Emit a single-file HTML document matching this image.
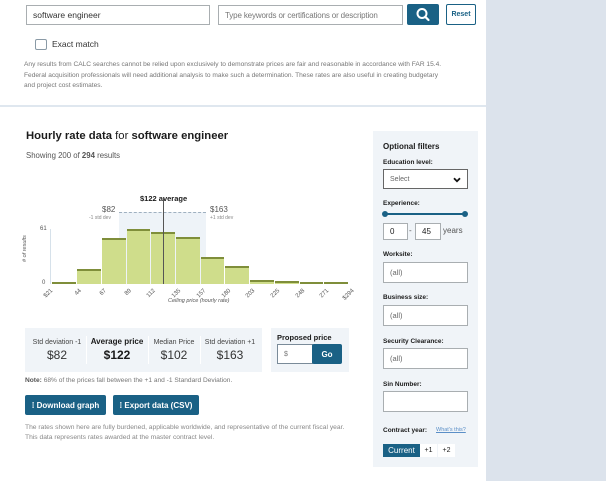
<!DOCTYPE html>
<html><head><meta charset="utf-8"><style>
*{box-sizing:border-box;margin:0;padding:0}
body{width:606px;height:481px;overflow:hidden;background:#dce3ec;font-family:"Liberation Sans",sans-serif;color:#1b1b1b;position:relative}
.a{position:absolute}
.main{left:0;top:0;width:486px;height:481px;background:#fff}
.inp{border:1px solid #a9aeb1;background:#fff;font-size:9px;padding-left:6px;display:flex;align-items:center;white-space:nowrap;overflow:hidden}
.lbl{font-size:6.5px;font-weight:bold}
.bar{position:absolute;background:#cfdd8b;border-top:2px solid #7f8e3a;bottom:0}
.btn{background:#1a6185;color:#fff;font-weight:bold;font-size:8px;display:flex;align-items:center;justify-content:center;border-radius:2px}
.tick{position:absolute;font-size:6px;color:#555;transform:rotate(-45deg);transform-origin:right top}
</style></head><body>
<div class="a main"></div>
<div class="a inp" style="left:26px;top:5px;width:184px;height:20px;color:#333;font-size:8.5px">software engineer</div>
<div class="a inp" style="left:218px;top:5px;width:185px;height:20px;color:#777;font-size:8px;letter-spacing:-0.15px">Type keywords or certifications or description</div>
<div class="a" style="left:407px;top:4px;width:32px;height:21px;background:#1a6185;border-radius:2px">
<svg width="32" height="21" viewBox="0 0 32 21"><circle cx="15" cy="9.5" r="4.5" fill="none" stroke="#fff" stroke-width="2"/><line x1="18.3" y1="12.8" x2="21.5" y2="16" stroke="#fff" stroke-width="2.2" stroke-linecap="round"/></svg></div>
<div class="a" style="left:446px;top:4px;width:30px;height:21px;border:1px solid #1a6185;border-radius:2px;color:#1a6185;font-size:7px;font-weight:bold;display:flex;align-items:center;justify-content:center">Reset</div>
<div class="a" style="left:35px;top:39px;width:12px;height:11px;border:1px solid #8a9aa6;border-radius:2px"></div>
<div class="a" style="left:52px;top:39px;font-size:8.5px;color:#333">Exact match</div>
<div class="a" style="left:24px;top:60px;width:420px;font-size:6.6px;line-height:10.5px;color:#777">Any results from CALC searches cannot be relied upon exclusively to demonstrate prices are fair and reasonable in accordance with FAR 15.4. Federal acquisition professionals will need additional analysis to make such a determination. These rates are also useful in creating budgetary and project cost estimates.</div>
<div class="a" style="left:0;top:105px;width:486px;height:2px;background:#dfe7ef"></div>

<div class="a" style="left:26px;top:130px;font-size:11.3px;font-weight:bold">Hourly rate data <span style="font-weight:normal">for</span> software engineer</div>
<div class="a" style="left:26px;top:151px;font-size:7.8px;color:#555">Showing 200 of <b>294</b> results</div>

<div class="a" style="left:119px;top:212px;width:87px;height:72px;background:#eef3f8"></div>
<div class="a" style="left:119px;top:212px;width:87px;border-top:1px dashed #9fb0c0"></div>
<div class="a" style="left:102px;top:205px;font-size:8px;color:#555">$82</div>
<div class="a" style="left:89px;top:215px;font-size:5px;color:#888">-1 std dev</div>
<div class="a" style="left:210px;top:205px;font-size:8px;color:#555">$163</div>
<div class="a" style="left:210px;top:215px;font-size:5px;color:#888">+1 std dev</div>
<div class="a" style="left:140px;top:194px;font-size:7.5px;font-weight:bold">$122 average</div>
<div class="a" style="left:50px;top:229px;width:1px;height:55px;background:#d6e1ea"></div>
<div class="a" style="left:40px;top:226px;font-size:6px;color:#555">61</div>
<div class="a" style="left:42px;top:280px;font-size:6px;color:#555">0</div>
<div class="a" style="left:22px;top:262px;font-size:5.5px;color:#555;transform:rotate(-90deg);transform-origin:left top;white-space:nowrap;font-style:italic"># of results</div>
<div class="a" style="left:52px;top:220px;width:300px;height:64px">
<div class="bar" style="left:0;width:24px;height:2px"></div>
<div class="bar" style="left:25px;width:24px;height:15px"></div>
<div class="bar" style="left:50px;width:24px;height:46px"></div>
<div class="bar" style="left:75px;width:23px;height:55px"></div>
<div class="bar" style="left:99px;width:24px;height:52px"></div>
<div class="bar" style="left:124px;width:24px;height:47px"></div>
<div class="bar" style="left:149px;width:23px;height:27px"></div>
<div class="bar" style="left:173px;width:24px;height:18px"></div>
<div class="bar" style="left:198px;width:24px;height:4px"></div>
<div class="bar" style="left:223px;width:24px;height:3px"></div>
<div class="bar" style="left:248px;width:23px;height:1px"></div>
<div class="bar" style="left:272px;width:24px;height:2px"></div>
</div>
<div class="a" style="left:163px;top:198px;width:1px;height:86px;background:#555"></div>
<div class="tick" style="left:40px;top:288px">$21</div>
<div class="tick" style="left:72px;top:288px">44</div>
<div class="tick" style="left:97px;top:288px">67</div>
<div class="tick" style="left:122px;top:288px">89</div>
<div class="tick" style="left:143px;top:288px">112</div>
<div class="tick" style="left:168px;top:288px">135</div>
<div class="tick" style="left:193px;top:288px">157</div>
<div class="tick" style="left:218px;top:288px">180</div>
<div class="tick" style="left:242px;top:288px">203</div>
<div class="tick" style="left:267px;top:288px">225</div>
<div class="tick" style="left:292px;top:288px">248</div>
<div class="tick" style="left:316px;top:288px">271</div>
<div class="tick" style="left:338px;top:288px">$294</div>
<div class="a" style="left:168px;top:298px;font-size:5.5px;font-style:italic;color:#555">Ceiling price (hourly rate)</div>

<div class="a" style="left:25px;top:328px;width:237px;height:44px;background:#f0f4f8"></div>
<div class="a" style="left:28px;top:339px;width:58px;text-align:center;font-size:7px;color:#444">Std deviation -1<div style="font-size:12px;color:#333;margin-top:2px">$82</div></div>
<div class="a" style="left:86px;top:337px;width:62px;text-align:center;font-size:8px;font-weight:bold">Average price<div style="font-size:12px;margin-top:2px">$122</div></div>
<div class="a" style="left:148px;top:339px;width:52px;text-align:center;font-size:7px;color:#444">Median Price<div style="font-size:12px;color:#333;margin-top:2px">$102</div></div>
<div class="a" style="left:200px;top:339px;width:60px;text-align:center;font-size:7px;color:#444">Std deviation +1<div style="font-size:12px;color:#333;margin-top:2px">$163</div></div>
<div class="a" style="left:86px;top:336px;width:1px;height:28px;background:#fff"></div>
<div class="a" style="left:148px;top:336px;width:1px;height:28px;background:#fff"></div>
<div class="a" style="left:200px;top:336px;width:1px;height:28px;background:#fff"></div>
<div class="a" style="left:271px;top:328px;width:78px;height:44px;background:#f0f4f8"></div>
<div class="a" style="left:277px;top:333px;font-size:7.5px;font-weight:bold">Proposed price</div>
<div class="a inp" style="left:277px;top:344px;width:36px;height:20px;font-size:7px;color:#777;border-color:#7a8b99">$</div>
<div class="a btn" style="left:312px;top:344px;width:30px;height:20px">Go</div>
<div class="a" style="left:25px;top:377px;font-size:6.6px;color:#777"><b style="color:#555">Note:</b> 68% of the prices fall between the +1 and -1 Standard Deviation.</div>
<div class="a btn" style="left:25px;top:395px;width:81px;height:20px">⁞ Download graph</div>
<div class="a btn" style="left:113px;top:395px;width:86px;height:20px">⁞ Export data (CSV)</div>
<div class="a" style="left:25px;top:423px;width:330px;font-size:6.7px;line-height:10px;color:#888">The rates shown here are fully burdened, applicable worldwide, and representative of the current fiscal year. This data represents rates awarded at the master contract level.</div>

<div class="a" style="left:373px;top:131px;width:105px;height:336px;background:#f0f4f8"></div>
<div class="a" style="left:383px;top:142px;font-size:8px;font-weight:bold">Optional filters</div>
<div class="a lbl" style="left:383px;top:159px">Education level:</div>
<div class="a inp" style="left:383px;top:169px;width:85px;height:20px;font-size:7px;color:#666;border-color:#666">Select<svg style="position:absolute;right:6px;top:7px" width="8" height="6" viewBox="0 0 8 6"><path d="M1 1.2 L4 4.2 L7 1.2" fill="none" stroke="#111" stroke-width="1.8"/></svg></div>
<div class="a lbl" style="left:383px;top:200px">Experience:</div>
<div class="a" style="left:385px;top:213px;width:80px;height:2px;background:#1a6185"></div>
<div class="a" style="left:382px;top:211px;width:6px;height:6px;border-radius:50%;background:#1a6185"></div>
<div class="a" style="left:462px;top:211px;width:6px;height:6px;border-radius:50%;background:#1a6185"></div>
<div class="a inp" style="left:383px;top:223px;width:25px;height:17px;font-size:8px">0</div>
<div class="a" style="left:409px;top:226px;font-size:8px;color:#555">-</div>
<div class="a inp" style="left:415px;top:223px;width:26px;height:17px;font-size:8px">45</div>
<div class="a" style="left:443px;top:226px;font-size:8px;color:#555">years</div>
<div class="a lbl" style="left:383px;top:251px">Worksite:</div>
<div class="a inp" style="left:383px;top:262px;width:85px;height:21px;font-size:7.5px;color:#666">(all)</div>
<div class="a lbl" style="left:383px;top:294px">Business size:</div>
<div class="a inp" style="left:383px;top:305px;width:85px;height:21px;font-size:7.5px;color:#666">(all)</div>
<div class="a lbl" style="left:383px;top:338px">Security Clearance:</div>
<div class="a inp" style="left:383px;top:348px;width:85px;height:21px;font-size:7.5px;color:#666">(all)</div>
<div class="a lbl" style="left:383px;top:381px">Sin Number:</div>
<div class="a inp" style="left:383px;top:391px;width:85px;height:21px"></div>
<div class="a lbl" style="left:383px;top:427px">Contract year:</div>
<div class="a" style="left:436px;top:427px;font-size:5.5px;color:#5b8fc7;text-decoration:underline">What's this?</div>
<div class="a" style="left:383px;top:444px;width:37px;height:13px;background:#1a6185;color:#fff;font-size:8px;display:flex;align-items:center;justify-content:center">Current</div>
<div class="a" style="left:420px;top:444px;width:17px;height:13px;background:#fff;font-size:7px;display:flex;align-items:center;justify-content:center">+1</div>
<div class="a" style="left:438px;top:444px;width:17px;height:13px;background:#fff;font-size:7px;display:flex;align-items:center;justify-content:center">+2</div>
</body></html>
